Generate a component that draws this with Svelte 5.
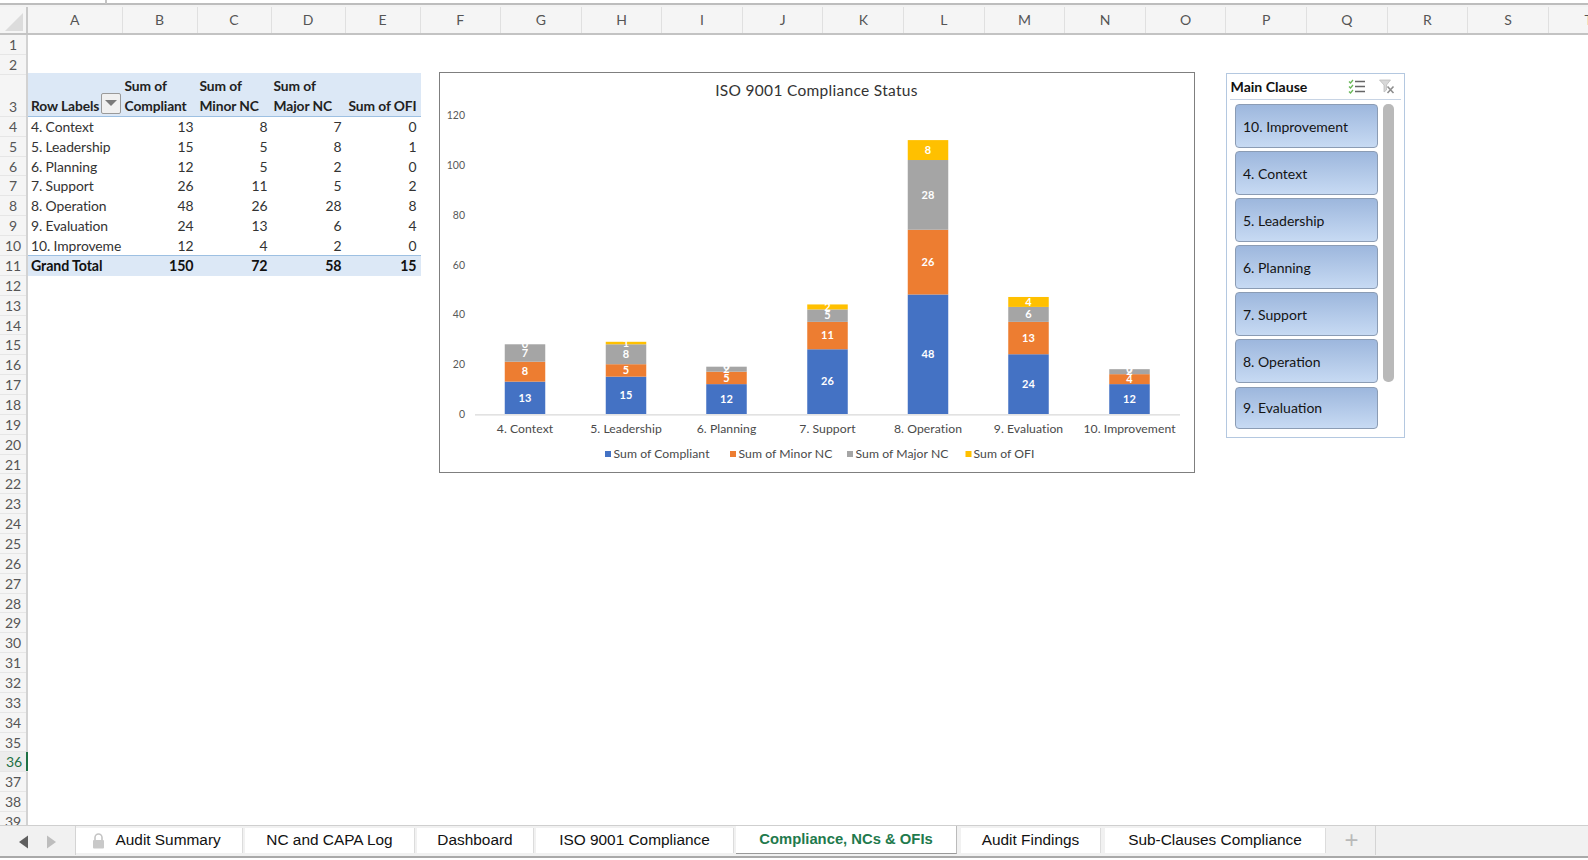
<script>
  const colW = [94.5, 75, 74, 74, 75, ...Array(15).fill(80.6)];
  const colL = 'ABCDEFGHIJKLMNOPQRST'.split('');
  const pivot = [
    ['4. Context', 13, 8, 7, 0],
    ['5. Leadership', 15, 5, 8, 1],
    ['6. Planning', 12, 5, 2, 0],
    ['7. Support', 26, 11, 5, 2],
    ['8. Operation', 48, 26, 28, 8],
    ['9. Evaluation', 24, 13, 6, 4],
    ['10. Improveme', 12, 4, 2, 0]
  ];
  const total = ['Grand Total', 150, 72, 58, 15];
  const rowNums = Array.from({ length: 39 }, (_, i) => i + 1);

  const slicer = ['10. Improvement', '4. Context', '5. Leadership', '6. Planning', '7. Support', '8. Operation', '9. Evaluation'];
  const tabs = [
    { t: 'NC and CAPA Log', w: 169 },
    { t: 'Dashboard', w: 116 },
    { t: 'ISO 9001 Compliance', w: 197 }
  ];

  const base = 342;  // chart-local y of zero
  const unit = 2.49;
  const barW = 40.5;
  const colors = ['#4472c4', '#ed7d31', '#a5a5a5', '#ffc000'];
  const cats = ['4. Context', '5. Leadership', '6. Planning', '7. Support', '8. Operation', '9. Evaluation', '10. Improvement'];
  const centers = [86, 187, 287.5, 388.5, 489, 589.5, 690.5];
  const bars = pivot.map((p, i) => {
    let acc = 0;
    const segs = p.slice(1).map((v, s) => {
      const y0 = acc;
      acc += v;
      return { v, color: colors[s], y: base - acc * unit, h: v * unit, mid: base - (y0 + v / 2) * unit };
    });
    return { cx: centers[i], cat: cats[i], segs };
  });
  const ticks = [0, 20, 40, 60, 80, 100, 120];
  const legend = [
    { x: 166, tx: 174.5, t: 'Sum of Compliant', c: colors[0] },
    { x: 291, tx: 299.5, t: 'Sum of Minor NC', c: colors[1] },
    { x: 408, tx: 416.5, t: 'Sum of Major NC', c: colors[2] },
    { x: 526.5, tx: 534.5, t: 'Sum of OFI', c: colors[3] }
  ];
</script>

<div class="app">
  <div class="strip"><span class="namebox"></span></div>

  <div class="cols">
    <div class="corner"><span class="tri"></span></div>
    {#each colL as c, i}
      <div class="col" style="width:{colW[i]}px">{c}</div>
    {/each}
  </div>

  <div class="grid">
    <div class="rownums">
      {#each rowNums as n}
        <div class="rn" class:tall={n === 3} class:cur={n === 36}>{n}</div>
      {/each}
    </div>

    <div class="cells">
      <div class="blank"></div>
      <div class="blank"></div>
      <div class="pivot">
        <div class="phead">
          <div class="pc a lab">Row Labels
            <span class="filter"><span class="ftri"></span></span>
          </div>
          <div class="pc b">Sum of<br />Compliant</div>
          <div class="pc c">Sum of<br />Minor NC</div>
          <div class="pc d">Sum of<br />Major NC</div>
          <div class="pc e ofi">Sum of OFI</div>
        </div>
        {#each pivot as r}
          <div class="prow">
            <div class="pc a clip">{r[0]}</div>
            <div class="pc b num">{r[1]}</div>
            <div class="pc c num">{r[2]}</div>
            <div class="pc d num">{r[3]}</div>
            <div class="pc e num">{r[4]}</div>
          </div>
        {/each}
        <div class="prow gt">
          <div class="pc a">{total[0]}</div>
          <div class="pc b num">{total[1]}</div>
          <div class="pc c num">{total[2]}</div>
          <div class="pc d num">{total[3]}</div>
          <div class="pc e num">{total[4]}</div>
        </div>
      </div>

      <div class="chart">
        <svg width="756" height="401" viewBox="0 0 756 401">
          <text class="title" x="377.5" y="24" text-anchor="middle">ISO 9001 Compliance Status</text>
          {#each ticks as t}
            <text class="tick" x="26" y={base - t * unit + 4} text-anchor="end">{t}</text>
          {/each}
          <line x1="36" x2="741" y1={base + 0.8} y2={base + 0.8} stroke="#d9d9d9" stroke-width="1.2" />
          {#each bars as b}
            {#each b.segs as s}
              <rect x={b.cx - barW / 2} y={s.y} width={barW} height={s.h} fill={s.color} />
            {/each}
          {/each}
          {#each bars as b}
            {#each b.segs as s}
              <text class="dl" x={b.cx} y={s.mid + 3.8} text-anchor="middle">{s.v}</text>
            {/each}
            <text class="cat" x={b.cx} y="361" text-anchor="middle">{b.cat}</text>
          {/each}
          {#each legend as l}
            <rect x={l.x} y="379" width="6" height="6" fill={l.c} />
            <text class="leg" x={l.tx} y="386">{l.t}</text>
          {/each}
        </svg>
      </div>

      <div class="slicer">
        <div class="shead">
          <span class="stitle">Main Clause</span>
          <svg class="ico1" width="18" height="15" viewBox="0 0 18 15">
            <path d="M1 2.5l1.5 1.5L5 1M1 7.5L2.5 9 5 6M1 12.5L2.5 14 5 11" fill="none" stroke="#69b858" stroke-width="1.3" />
            <path d="M7 2.5h10M7 7.5h10M7 12.5h10" stroke="#666" stroke-width="1.3" />
          </svg>
          <svg class="ico2" width="16" height="15" viewBox="0 0 16 15">
            <path d="M0.5 1h11L7.5 6v5L5 13V6z" fill="#d8d8d8" stroke="#bcbcbc" stroke-width="0.8" />
            <path d="M8.5 7.5l6 6.5M14.5 7.5l-6 6.5" stroke="#8e8e8e" stroke-width="1.6" />
          </svg>
        </div>
        <div class="sbody">
          <div class="slist">
            {#each slicer as s, i}
              <div class="sbtn" class:last={i === 6}>{s}</div>
            {/each}
          </div>
          <div class="sbar"></div>
        </div>
      </div>
    </div>
  </div>

  <div class="tabbar">
    <div class="nav">
      <svg width="76" height="32" viewBox="0 0 76 32">
        <path d="M28 9.5v13l-9-6.5z" fill="#5f5f5f" />
        <path d="M47 9.5v13l9-6.5z" fill="#bdbdbd" />
      </svg>
    </div>
    <div class="tab first" style="width:166px">
      <svg class="lock" width="13" height="16" viewBox="0 0 13 16">
        <path d="M3 7V4.5a3.5 3.5 0 0 1 7 0V7" fill="none" stroke="#c4c4c4" stroke-width="1.6" />
        <rect x="1" y="7" width="11" height="8.5" rx="1" fill="#c9c9c9" />
      </svg>
      Audit Summary
    </div>
    {#each tabs as t}
      <div class="tab" style="width:{t.w}px">{t.t}</div>
    {/each}
    <div class="tab active" style="width:221px">Compliance, NCs &amp; OFIs</div>
    <div class="tab wide" style="width:139px">Audit Findings</div>
    <div class="tab" style="width:220px">Sub-Clauses Compliance</div>
    <div class="plus">+</div>
  </div>
</div>

<style>
  :global(body) { margin: 0; background: #fff; }
  .app {
    width: 1588px;
    height: 860px;
    overflow: hidden;
    display: flex;
    flex-direction: column;
    font-family: Lato, "Liberation Sans", sans-serif;
    background: #fff;
    color: #1c1c1c;
  }
  .strip {
    height: 7px;
    flex: none;
    box-sizing: border-box;
    background: linear-gradient(#fff 0 3.5px, #bdbdbd 3.5px 5px, #f2f2f2 5px);
  }
  .namebox { display: block; width: 105px; height: 4px; border-right: 2px solid #c4c4c4; }
  .cols {
    flex: none;
    display: flex;
    height: 28px;
    box-sizing: border-box;
    background: #f5f5f5;
    border-bottom: 2px solid #c3c3c3;
    overflow: hidden;
  }
  .corner { width: 28px; flex: none; box-sizing: border-box; border-right: 2px solid #c9c9c9; position: relative; }
  .tri {
    position: absolute; right: 3px; bottom: 2px;
    width: 0; height: 0;
    border-left: 18px solid transparent;
    border-bottom: 18px solid #dcdcdc;
  }
  .col {
    flex: none;
    box-sizing: border-box;
    text-align: center;
    font-size: 14px;
    line-height: 25px;
    color: #555;
    border-right: 1px solid #e0e0e0;
  }
  .grid { flex: 1; min-height: 0; display: flex; overflow: hidden; }
  .rownums { width: 28px; flex: none; box-sizing: border-box; background: #f5f5f5; border-right: 2px solid #d2d2d2; }
  .rn {
    height: 19.87px;
    box-sizing: border-box;
    text-align: center;
    font-size: 14px;
    line-height: 20px;
    color: #555;
    border-bottom: 1px solid #e6e6e6;
  }
  .rn.tall { height: 42.2px; line-height: 64px; }
  .rn.cur { color: #1e7145; box-shadow: inset -2px 0 0 #1e7145; margin-right: -2px; background: #ececec; }
  .cells { flex: 1; position: relative; min-width: 0; }
  .blank { height: 19.87px; }
  .pivot { width: 392.5px; font-size: 13.9px; letter-spacing: -0.1px; }
  .phead {
    display: flex;
    height: 43.7px;
    margin-top: -1.5px;
    padding-bottom: 0;
    box-sizing: border-box;
    background: #dce8f6;
    border-bottom: 1.5px solid #9dc0e2;
    align-items: flex-end;
    line-height: 20px;
    color: #111;
  }
  .prow { display: flex; height: 19.87px; line-height: 20px; color: #333; }
  .pc { box-sizing: border-box; flex: none; white-space: nowrap; }
  .pc.a { width: 94.5px; padding-left: 3px; }
  .pc.b { width: 75px; padding-left: 2px; }
  .pc.c, .pc.d { width: 74px; padding-left: 2px; }
  .pc.e { width: 75px; padding-right: 4px; }
  .phead .pc { font-weight: 700; font-size: 13.8px; color: #222; }
  .lab { position: relative; }
  .ofi { text-align: right; }
  .num { text-align: right; padding-right: 4px; }
  .pc.b.num, .pc.c.num, .pc.d.num { padding-left: 0; }
  .clip { overflow: hidden; }
  .gt {
    background: #dce8f6;
    font-weight: 700;
    color: #111;
    border-top: 1.5px solid #9dc0e2;
    box-sizing: border-box;
    font-size: 14.2px;
    margin-top: -0.5px;
    height: 20.4px;
  }
  .filter {
    position: absolute; left: 73px; bottom: 2px;
    width: 20px; height: 21px;
    box-sizing: border-box;
    background: #f0f0f0;
    border: 1px solid #9a9a9a;
    border-radius: 2px;
    display: flex; align-items: center; justify-content: center;
  }
  .ftri { width: 0; height: 0; border-left: 6px solid transparent; border-right: 6px solid transparent; border-top: 6px solid #7a7a7a; }

  .chart {
    position: absolute;
    left: 411px; top: 36.5px;
    width: 756px; height: 401px;
    box-sizing: border-box;
    background: #fff;
    border: 1px solid #7f7f7f;
  }
  .chart svg { display: block; margin: -1px 0 0 -1px; }
  .chart text { font-family: Lato, "Liberation Sans", sans-serif; }
  .title { font-size: 15.5px; fill: #333; letter-spacing: 0.3px; }
  .tick { font-size: 10.5px; fill: #595959; }
  .cat { font-size: 12.2px; fill: #4a4a4a; letter-spacing: 0.06px; }
  .leg { font-size: 12.2px; fill: #4a4a4a; letter-spacing: 0.06px; }
  .dl { font-size: 11px; font-weight: 700; fill: #fff; }

  .slicer {
    position: absolute;
    left: 1197.5px; top: 37.5px;
    width: 179px; height: 365px;
    box-sizing: border-box;
    background: #fff;
    border: 1.5px solid #b4c8e0;
    padding: 0 3px;
  }
  .shead {
    height: 26.5px;
    box-sizing: border-box;
    border-bottom: 1.5px solid #c8d4e4;
    display: flex;
    align-items: center;
    padding-left: 1px;
    position: relative;
  }
  .stitle { font-weight: 700; font-size: 14.1px; color: #111; }
  .ico1 { position: absolute; left: 118px; top: 5px; }
  .ico2 { position: absolute; left: 149px; top: 5px; }
  .sbody { display: flex; padding: 4px 0 0 5px; }
  .slist { width: 143px; flex: none; display: flex; flex-direction: column; gap: 3.1px; }
  .sbtn {
    height: 44px;
    box-sizing: border-box;
    border: 1px solid #8b9cb4;
    border-radius: 4px;
    background: linear-gradient(#9db7dd, #c7daf3);
    padding-left: 7.5px;
    line-height: 43px;
    font-size: 14px;
    color: #141414;
  }
  .sbtn.last { height: 42px; line-height: 39px; }
  .sbar { width: 10.5px; height: 278px; margin-left: 5.5px; background: #b9b9b9; border-radius: 5px; }

  .tabbar {
    flex: none;
    height: 33px;
    margin-bottom: 2px;
    display: flex;
    box-sizing: border-box;
    background: #f1f1f1;
    border-top: 1.5px solid #cfcfcf;
    border-bottom: 2px solid #a9a9a9;
    font-family: "Liberation Sans", Arial, sans-serif;
    font-size: 15.4px;
    color: #111;
  }
  .nav { width: 76px; flex: none; height: 29px; border-right: 1px solid #d4d4d4; box-sizing: border-box; }
  .nav svg { display: block; }
  .tab {
    flex: none;
    box-sizing: border-box;
    height: 25px;
    margin-top: 2px;
    margin-right: 3px;
    line-height: 24px;
    text-align: center;
    background: #fff;
    box-shadow: 1px 0 0 #dcdcdc;
    white-space: nowrap;
  }
  .first { text-align: left; padding-left: 39.5px; position: relative; }
  .lock { position: absolute; left: 16px; top: 5px; }
  .active {
    margin-top: 0;
    height: 27.5px;
    line-height: 27px;
    font-size: 14.8px;
    color: #1f7a4d;
    font-weight: 700;
    border-right: 1px solid #bbb;
    border-bottom: 1.5px solid #999;
    box-shadow: none;
    margin-right: 4px;
  }
  .wide { margin-right: 5px; }
  .plus {
    flex: none; width: 48px; height: 29px;
    box-sizing: border-box;
    text-align: center;
    font-size: 24px; line-height: 28px;
    color: #b9b9b9;
    border-right: 1px solid #d4d4d4;
  }
</style>
